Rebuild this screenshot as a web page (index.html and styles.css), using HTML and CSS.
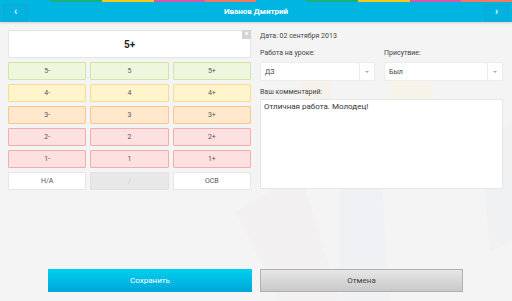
FILE: index.html
```html
<!DOCTYPE html>
<html>

<head>
  <meta name="viewport" content="width=device-width, initial-scale=1">
  <link rel="stylesheet" href="styles.css">
</head>

<body>
  <svg class="decor" width="512" height="279" viewBox="0 0 512 279">
    <path d="M300 60 L330 55 L335 110 L305 115 Z" fill="#f8f2e6" />
    <path d="M390 60 L430 50 L440 110 L395 120 Z" fill="#f8f3e4" />
    <path d="M236 190 L300 150 L340 279 L280 279 Z" fill="#f3eff1" />
    <path d="M340 150 L380 130 L390 279 L340 279 Z" fill="#eef1f4" />
    <path d="M480 120 L512 100 L512 220 L490 230 Z" fill="#eef0f3" />
  </svg>

  <div class="strip">
    <span></span>
    <span class="c-green"></span>
    <span class="c-yellow"></span>
    <span class="c-pink"></span>
    <span class="c-orange"></span>
    <span></span>
    <span class="c-green"></span>
    <span class="c-yellow"></span>
    <span class="c-pink"></span>
    <span class="c-orange"></span>
  </div>

  <div class="navbar">
    <a href="#" class="navbtn">&#8249;</a>
    <span class="title">Иванов Дмитрий</span>
    <a href="#" class="navbtn">&#8250;</a>
  </div>

  <section class="content">
    <div class="left">
      <div class="display">
        <span>5+</span>
        <a href="#" class="clear">&#215;</a>
      </div>
      <div class="grades">
        <div class="grade green">5-</div>
        <div class="grade green">5</div>
        <div class="grade green">5+</div>
        <div class="grade yellow">4-</div>
        <div class="grade yellow">4</div>
        <div class="grade yellow">4+</div>
        <div class="grade orange">3-</div>
        <div class="grade orange">3</div>
        <div class="grade orange">3+</div>
        <div class="grade red">2-</div>
        <div class="grade red">2</div>
        <div class="grade red">2+</div>
        <div class="grade red">1-</div>
        <div class="grade red">1</div>
        <div class="grade red">1+</div>
        <div class="grade plain">Н/А</div>
        <div class="grade off">/</div>
        <div class="grade plain">ОСВ</div>
      </div>
    </div>

    <div class="right">
      <div class="date">Дата: 02 сентября 2013</div>
      <div class="selects">
        <div class="field wide">
          <div class="label">Работа на уроке:</div>
          <div class="select"><span>ДЗ</span><i class="arrow"></i></div>
        </div>
        <div class="field">
          <div class="label">Присутвие:</div>
          <div class="select"><span>Был</span><i class="arrow"></i></div>
        </div>
      </div>
      <div class="label tight">Ваш комментарий:</div>
      <div class="comment">Отличная работа. Молодец!</div>
    </div>
  </section>

  <div class="footer">
    <a href="#" class="btn save">Сохранить</a>
    <a href="#" class="btn cancel">Отмена</a>
  </div>
</body>

</html>
```

FILE: styles.css
```css
/* ----------App-Shell--------------- */
body {
  padding: 0px;
  margin: 0px;
  height: 301px;
  display: flex;
  flex-direction: column;
  background-color: #f4f4f4;
  font-family: Roboto, "Noto Sans", sans-serif;
  font-size: 7px;
  color: #444;
  position: relative;
  overflow: hidden;
}

a {
  text-decoration: none;
}

.decor {
  position: absolute;
  left: 0;
  top: 22px;
  opacity: 0.7;
}

.strip {
  position: absolute;
  top: 0;
  left: 0;
  width: 100%;
  height: 2px;
  display: flex;
  z-index: 2;
}

.strip span {
  flex: 1;
}

.c-green { background-color: #1bb07a; }
.c-yellow { background-color: #f7c51c; }
.c-pink { background-color: #d357ae; }
.c-orange { background-color: #f4795e; }

.navbar {
  display: flex;
  flex-direction: row;
  align-items: center;
  justify-content: space-between;
  height: 22px;
  padding: 0 3px;
  background-color: #00b5e2;
  box-shadow: 0 1px 2px rgba(0, 0, 0, 0.15);
  position: relative;
  z-index: 1;
}

.navbtn {
  width: 23px;
  height: 15px;
  margin-top: 2px;
  border: 1px solid #1aa5cc;
  background-color: #00b2df;
  color: #fff;
  font-size: 10px;
  font-weight: bold;
  line-height: 13px;
  text-align: center;
}

.title {
  color: #fff;
  font-size: 8px;
  font-weight: bold;
}

/* --------------content---------------------------- */
.content {
  flex: 1;
  display: flex;
  gap: 9px;
  padding: 8px 9px 0 8px;
  position: relative;
}

.left {
  width: 243px;
}

.display {
  position: relative;
  height: 26px;
  background-color: #fff;
  border: 1px solid #e6e6e6;
  display: flex;
  align-items: center;
  justify-content: center;
  font-size: 10px;
  font-weight: bold;
  color: #222;
}

.clear {
  position: absolute;
  top: -1px;
  right: -1px;
  width: 9px;
  height: 9px;
  background-color: #d4d4d4;
  color: #fff;
  font-size: 7px;
  line-height: 9px;
  text-align: center;
}

.grades {
  display: grid;
  grid-template-columns: repeat(3, 1fr);
  gap: 4px 4px;
  margin-top: 4px;
}

.grade {
  height: 16px;
  border: 1px solid #ddd;
  border-radius: 1px;
  display: flex;
  align-items: center;
  justify-content: center;
  font-size: 7px;
  color: #555;
}

.green { background-color: #eef7dd; border-color: #cfe6a6; }
.yellow { background-color: #fff4cb; border-color: #fadd8c; }
.orange { background-color: #ffe8cc; border-color: #fbc68d; }
.red { background-color: #fde0e0; border-color: #f3abab; }
.plain { background-color: #fff; border-color: #e6e6e6; }
.off { background-color: #e8e8e8; border-color: #e2e2e2; color: #ccc; }

.right {
  width: 243px;
}

.date {
  margin-top: 2px;
  line-height: 9px;
}

.selects {
  display: flex;
  gap: 9px;
  margin-top: 8px;
}

.field {
  width: 119px;
}

.field.wide {
  width: 115px;
}

.label {
  line-height: 9px;
  margin-bottom: 4px;
}

.label.tight {
  margin-bottom: 2px;
}

.select {
  height: 17px;
  background-color: #fff;
  border: 1px solid #ececec;
  display: flex;
  align-items: center;
  justify-content: space-between;
  margin-bottom: 7px;
}

.select span {
  padding-left: 4px;
  color: #444;
}

.arrow {
  width: 14px;
  height: 17px;
  border-left: 1px solid #ececec;
  display: flex;
  align-items: center;
  justify-content: center;
}

.arrow::after {
  content: "";
  border-left: 2px solid transparent;
  border-right: 2px solid transparent;
  border-top: 2px solid #aaa;
}

.comment {
  height: 84px;
  background-color: #fff;
  border: 1px solid #e6e6e6;
  padding: 2px 3px;
  font-size: 8px;
  color: #333;
}

/* --------------footer---------------------------- */
.footer {
  display: flex;
  gap: 8px;
  padding: 0 49px 9px 48px;
  position: relative;
}

.btn {
  height: 23px;
  display: flex;
  align-items: center;
  justify-content: center;
  font-size: 8px;
  box-sizing: border-box;
}

.save {
  width: 204px;
  background: linear-gradient(#00d0ee, #00a6da);
  color: #fff;
}

.cancel {
  width: 203px;
  background: linear-gradient(#e6e6e6, #c9c9c9);
  border: 1px solid #b0b0b0;
  color: #444;
}
```
